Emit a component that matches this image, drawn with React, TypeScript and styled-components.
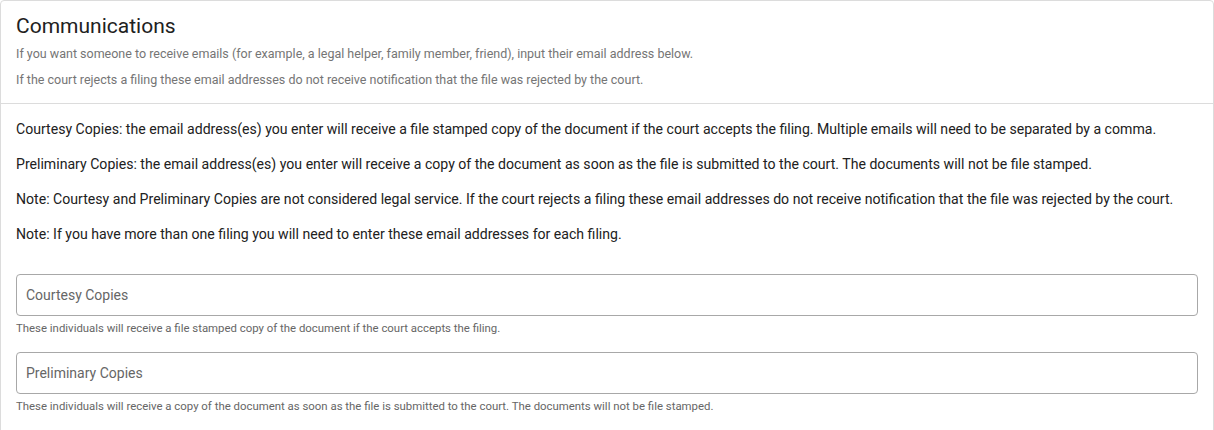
import styled, { createGlobalStyle } from "styled-components";

const GlobalStyle = createGlobalStyle`
  body {
    margin: 0;
    background: #fff;
    font-family: Roboto, "Liberation Sans", sans-serif;
  }
`;

const Card = styled.section`
  border: 1px solid #dcdcdc;
  border-radius: 4px;
  background: #fff;
  min-height: 440px;
  box-sizing: border-box;
`;

const Header = styled.header`
  padding: 12px 15px 10px;
  border-bottom: 1px solid #dcdcdc;
`;

const Title = styled.h2`
  margin: 0 0 2px;
  font-size: 21px;
  font-weight: 400;
  line-height: 26px;
  color: #212121;
`;

const Subtitle = styled.p`
  margin: 0;
  font-size: 12.5px;
  line-height: 26px;
  color: #757575;
`;

const Body = styled.div`
  padding: 15px 15px 0;
`;

const Paragraph = styled.p`
  margin: 0 0 15px;
  font-size: 14.1px;
  line-height: 20px;
  color: #212121;
`;

const Field = styled.div`
  margin-top: 30px;

  & + & {
    margin-top: 17px;
  }
`;

const Input = styled.input`
  display: block;
  width: 100%;
  height: 42px;
  box-sizing: border-box;
  padding: 0 9px;
  border: 1px solid #a8a8a8;
  border-radius: 4px;
  font-family: inherit;
  font-size: 14px;
  color: #212121;
  outline: none;

  &::placeholder {
    color: #666;
  }
`;

const Helper = styled.div`
  margin-top: 5px;
  font-size: 11.4px;
  line-height: 14px;
  color: #666;
`;

const paragraphs = [
  "Courtesy Copies: the email address(es) you enter will receive a file stamped copy of the document if the court accepts the filing. Multiple emails will need to be separated by a comma.",
  "Preliminary Copies: the email address(es) you enter will receive a copy of the document as soon as the file is submitted to the court. The documents will not be file stamped.",
  "Note: Courtesy and Preliminary Copies are not considered legal service. If the court rejects a filing these email addresses do not receive notification that the file was rejected by the court.",
  "Note: If you have more than one filing you will need to enter these email addresses for each filing.",
];

const fields = [
  {
    placeholder: "Courtesy Copies",
    helper:
      "These individuals will receive a file stamped copy of the document if the court accepts the filing.",
  },
  {
    placeholder: "Preliminary Copies",
    helper:
      "These individuals will receive a copy of the document as soon as the file is submitted to the court. The documents will not be file stamped.",
  },
];

export default function App() {
  return (
    <>
      <GlobalStyle />
      <Card>
        <Header>
          <Title>Communications</Title>
          <Subtitle>
            If you want someone to receive emails (for example, a legal helper, family member, friend), input their email address below.
          </Subtitle>
          <Subtitle>
            If the court rejects a filing these email addresses do not receive notification that the file was rejected by the court.
          </Subtitle>
        </Header>
        <Body>
          {paragraphs.map((text, i) => (
            <Paragraph key={i}>{text}</Paragraph>
          ))}
          {fields.map((field) => (
            <Field key={field.placeholder}>
              <Input placeholder={field.placeholder} />
              <Helper>{field.helper}</Helper>
            </Field>
          ))}
        </Body>
      </Card>
    </>
  );
}
